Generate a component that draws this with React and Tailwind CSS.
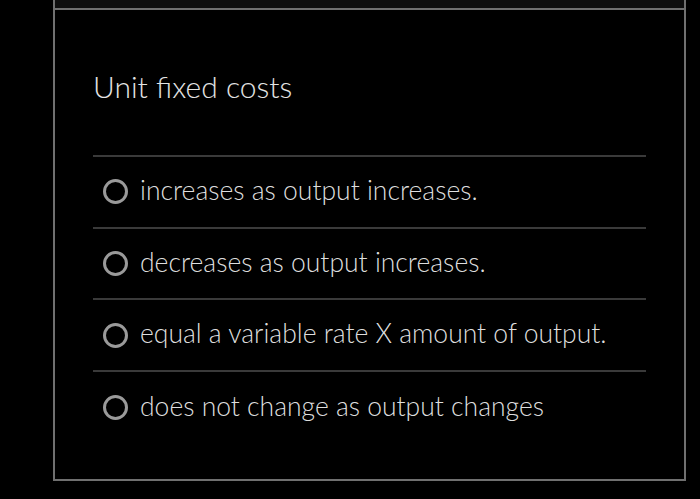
import React from 'react';

const options = [
  'increases as output increases.',
  'decreases as output increases.',
  'equal a variable rate X amount of output.',
  'does not change as output changes',
];

export default function App() {
  return (
    <div className="w-[700px] h-[499px] bg-black overflow-hidden font-['Lato','Liberation_Sans',sans-serif]">
      <div className="ml-[53px] w-[633px] h-[8px] bg-[#0e0e0e] border-x-2 border-[#6f6f6f]" />
      <div className="ml-[53px] w-[633px] h-[473px] border-2 border-[#707070] bg-black pl-[38px] pr-[38px]">
        <h2 className="pt-[58px] text-[30px] leading-[36px] font-light text-[#e4e4e4]">Unit fixed costs</h2>
        <div className="mt-[51px] border-t-2 border-[#3a3a3a]">
          {options.map((text, i) => (
            <div
              key={i}
              className={`flex items-center h-[71.7px] pl-[10px] pb-[4px] ${i < options.length - 1 ? 'border-b-2 border-[#3a3a3a]' : ''}`}
            >
              <span className="w-[25px] h-[25px] mt-[4px] rounded-full border-[3px] border-[#9a9a9a] shrink-0" />
              <span className="ml-[12px] text-[26.5px] leading-[32px] font-light text-[#dedede]">{text}</span>
            </div>
          ))}
        </div>
      </div>
    </div>
  );
}
